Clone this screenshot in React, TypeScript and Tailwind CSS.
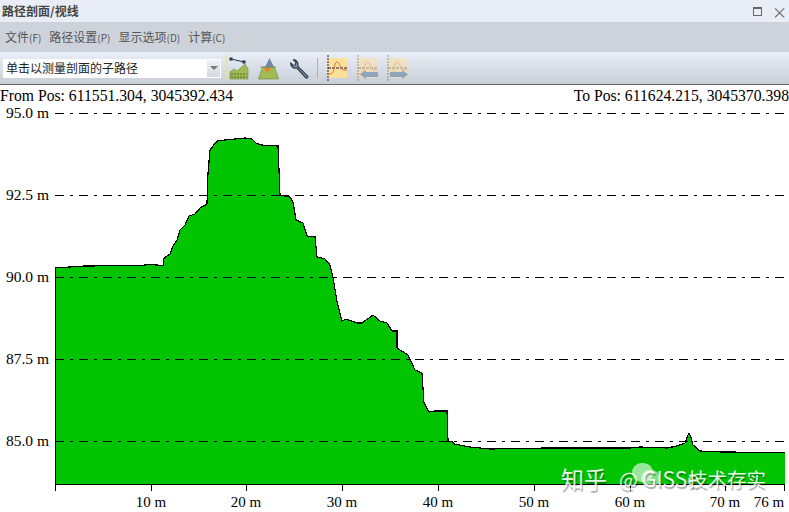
const SERIF = "font-['Liberation_Serif','Times_New_Roman',serif]";
const PTS = "55,268 85,266 140,265.5 150,264.5 163,265.5 164,258 170,254 173,246 177,240 180,230 185,225 189,216 195,214 200,208 207,204 208,173 210,150 213,146 217,141 225,140 245,138 252,139 256,143 261,145 278,146 280,195 290,197 293,202 296,220 303,223 307,236 315,237 317,257 325,259 330,265 333,277 337,302 342,321 346,319 357,323 362,323 373,315 380,321 387,323 392,331 397,331 397,348 408,355 415,370 422,373 424,403 429,412 435,411 447,411 448,441 453,442 454,444 470,447 490,449 547,448 630,448 640,447 667,448 677,446 685,443 688,435 689,433 691,437 693,445 700,451 722,452 785,452.5";

const yLabels: [string, number][] = [["95.0 m", 113], ["92.5 m", 195], ["90.0 m", 277], ["87.5 m", 359], ["85.0 m", 441]];
const ticks: [number, string, number][] = [[55, "", 0], [151, "10 m", 151], [246, "20 m", 246], [342, "30 m", 342], [438, "40 m", 438], [534, "50 m", 534], [630, "60 m", 630], [725, "70 m", 725], [784, "76 m", 769]];

function Chart() {
  return (
    <svg width="789" height="427" viewBox="0 85 789 427" className="block">
      <polygon points={`${PTS} 785,484 55,484`} fill="#00c400" />
      <polyline points={PTS} fill="none" stroke="#000" strokeWidth="1.2" shapeRendering="crispEdges" />
      <line x1="55.5" y1="268" x2="55.5" y2="484" stroke="#000" />
      <line x1="55" y1="484.5" x2="785" y2="484.5" stroke="#000" />
      {yLabels.map(([t, y]) => (
        <g key={t}>
          <line x1="55" y1={y + 0.5} x2="789" y2={y + 0.5} stroke="#000" strokeDasharray="9 6 3 6" />
          <text x="49" y={y + 5} textAnchor="end" fontFamily="Liberation Serif" fontSize="15.5" fill="#000">{t}</text>
        </g>
      ))}
      {ticks.map(([x, t, lx]) => (
        <g key={x}>
          <line x1={x + 0.5} y1="484" x2={x + 0.5} y2="491" stroke="#000" />
          {t && <text x={lx} y="507" textAnchor="middle" fontFamily="Liberation Serif" fontSize="15" fill="#000">{t}</text>}
        </g>
      ))}
    </svg>
  );
}

function ProfileA() {
  return (
    <svg width="20" height="24" viewBox="0 0 20 24" className="block">
      <path d="M1 23v-7l4-3 3 2 6-5 2-2 3 5v10z" fill="#a0bc52" stroke="#6b8632" strokeWidth="0.6" />
      <path d="M2 18h16M2 21h16" stroke="#3d5020" strokeDasharray="2 1" strokeWidth="0.8" />
      <path d="M2 3l13 3" stroke="#1f3550" strokeWidth="1" />
      <rect x="0.5" y="1.500" width="3" height="3" fill="#1f3550" />
      <rect x="13.500" y="4.500" width="3" height="3" fill="#1f3550" />
    </svg>
  );
}
function ProfileB() {
  return (
    <svg width="21" height="24" viewBox="0 0 21 24" className="block">
      <path d="M0.500 23l4-12 12 0 4 12z" fill="#a0bc52" stroke="#6b8632" strokeWidth="0.6" />
      <path d="M7 11l4.500-9 4.500 9z" fill="#6f8ba5" />
      <path d="M2 11h16" stroke="#666" strokeDasharray="2 1" strokeWidth="0.7" />
      <path d="M6 12h7l-3.500 5z" fill="#e8802a" />
    </svg>
  );
}
function Wrench() {
  return (
    <svg width="21" height="22" viewBox="0 0 24 24" className="block">
      <path d="M21.500 21.500L10 10c1-3-.5-7-5-7.500L8 6 7 8.500 4.500 9 2 6c-.5 4 3 7 7 6l10.500 11.500c1 .5 2.500-1 2-2z" fill="#8398ae" stroke="#2a394a" strokeWidth="1.300" strokeLinejoin="round" />
    </svg>
  );
}
function Curve({ dim, dir }: { dim?: boolean; dir?: "l" | "r" }) {
  return (
    <svg width="22" height="26" viewBox="0 0 22 26" className="block">
      <rect x="1" y="3" width="19" height="20" fill="#fddf9c" opacity={dim ? 0.5 : 1} />
      <g opacity={dim ? 0.4 : 1}>
        <path d="M1 0v26" stroke="#223" strokeDasharray="2 1" />
        <path d="M1 13h20" stroke="#223" strokeDasharray="3 1" />
        <path d="M2 19c3 0 4-1 5-5s1-7 3-7 3 4 4 6 3 2 6 2" fill="none" stroke="#e0702a" />
      </g>
      {dir === "l" && <path d="M21 17H9v-2l-6 4.500 6 4.500v-2h12z" fill="#8fa5bc" />}
      {dir === "r" && <path d="M3 17h12v-2l6 4.500-6 4.500v-2H3z" fill="#8fa5bc" />}
    </svg>
  );
}

function MenuItem({ t, k }: { t: string; k: string }) {
  return (
    <span className="text-[12px] text-[#555]">
      {t}<span className="text-[10px]">({k})</span>
    </span>
  );
}

export default function App() {
  return (
    <div className="relative w-[789px] h-[512px] overflow-hidden bg-white font-['Noto_Sans_CJK_SC',sans-serif]">
      <div className="flex h-[22px] items-center justify-between bg-[#e8edf6] pl-[2px] pr-[2px]">
        <span className="text-[12px] font-bold text-[#444]">路径剖面/视线</span>
        <div className="flex items-center gap-[10px]">
          <div className="h-[9px] w-[9px] border border-[#666] border-t-2" />
          <span className="text-[15px] leading-none text-[#666]">×</span>
        </div>
      </div>
      <div className="flex h-[30px] items-center gap-[8px] bg-[#ced3db] pl-[5px]">
        <MenuItem t="文件" k="F" />
        <MenuItem t="路径设置" k="P" />
        <MenuItem t="显示选项" k="D" />
        <MenuItem t="计算" k="C" />
      </div>
      <div className="flex h-[33px] items-center border-b border-[#666] bg-gradient-to-b from-[#e9eef8] to-[#c9ced6] pl-[3px]">
        <div className="flex h-[19px] w-[218px] items-center justify-between bg-white pl-[3px]">
          <span className="text-[12px] text-[#222]">单击以测量剖面的子路径</span>
          <div className="flex h-[19px] w-[15px] items-center justify-center border border-white bg-gradient-to-b from-[#eef1f6] to-[#d5d9e0]">
            <div className="h-0 w-0 border-x-[4px] border-t-[4px] border-x-transparent border-t-[#777]" />
          </div>
        </div>
        <div className="ml-[5px] h-[26px] w-px bg-[#dfe3a8]" />
        <div className="ml-[2px] flex items-center gap-[10px]">
          <ProfileA />
          <div className="ml-[-1px]"><ProfileB /></div>
          <Wrench />
        </div>
        <div className="ml-[7px] h-[20px] w-px bg-[#aab0b8]" />
        <div className="ml-[9px] flex items-center gap-[8px]">
          <Curve />
          <Curve dim dir="l" />
          <Curve dim dir="r" />
        </div>
      </div>
      <div className="relative">
        <Chart />
        <div className={`absolute left-0 right-0 top-0 flex justify-between text-[15.7px] leading-[21px] text-black ${SERIF}`}>
          <span>From Pos: 611551.304, 3045392.434</span>
          <span>To Pos: 611624.215, 3045370.398</span>
        </div>
      </div>
      <div className="absolute left-[561px] top-[461px] text-[23px] leading-[34px] text-white/90 [text-shadow:1px_2px_1px_rgba(0,0,0,0.35)]">
        知乎
      </div>
      <div className="absolute left-[619px] top-[465px] text-[20px] leading-[27px] text-white/85 [text-shadow:1px_2px_1px_rgba(0,0,0,0.35)]">
        @
      </div>
      <div className="absolute left-[632px] top-[463px] h-[19px] w-[21px] rounded-full bg-white/60" />
      <div className="absolute left-[641px] top-[470px] h-[17px] w-[19px] rounded-full bg-white/50" />
      <div className="absolute left-[642px] top-[464px] text-[21px] leading-[28px] whitespace-nowrap text-white/90 [text-shadow:1px_2px_1px_rgba(0,0,0,0.35)]">
        GISSe
      </div>
      <div className="absolute left-[688px] top-[465px] text-[19.500px] leading-[27px] whitespace-nowrap text-white/90 [text-shadow:1px_2px_1px_rgba(0,0,0,0.35)]">
        技术存实
      </div>
    </div>
  );
}
